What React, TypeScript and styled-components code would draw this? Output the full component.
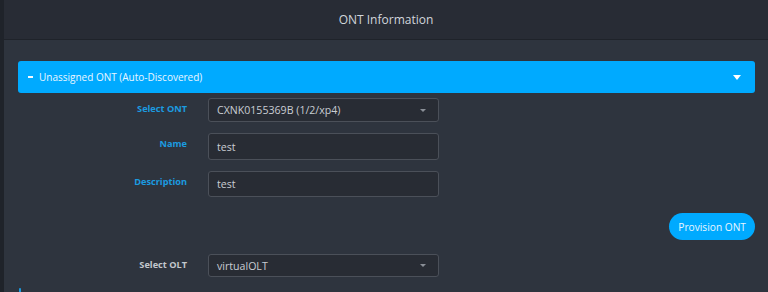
import styled, { createGlobalStyle } from "styled-components";

const GlobalStyle = createGlobalStyle`
  html, body {
    margin: 0;
    padding: 0;
    background: #2e343e;
    font-family: "Open Sans", "Noto Sans", sans-serif;
    overflow: hidden;
  }
`;

const Page = styled.div`
  display: flex;
  height: 292px;
`;

const SideStrip = styled.div`
  width: 4px;
  background: #1f232a;
`;

const Main = styled.div`
  flex: 1;
  display: flex;
  flex-direction: column;
`;

const Header = styled.header`
  height: 41px;
  background: #282c35;
  border-bottom: 1px solid #1f232a;
  display: flex;
  align-items: center;
  justify-content: center;
  color: #d2d6dc;
  font-size: 12px;
`;

const Content = styled.div`
  padding: 21px 13px 0 14px;
`;

const AccordionBar = styled.div`
  height: 32px;
  background: #00aaff;
  border-radius: 3px;
  display: flex;
  align-items: center;
  padding: 0 10px 0 10px;
  color: #eaf6ff;
  font-size: 10px;
`;

const Minus = styled.span`
  width: 5px;
  height: 1.5px;
  background: #f2f9ff;
  margin-right: 6px;
`;

const BarTitle = styled.span`
  flex: 1;
`;

const Caret = styled.span`
  width: 0;
  height: 0;
  border-left: 4px solid transparent;
  border-right: 4px solid transparent;
  border-top: 5px solid #ffffff;
  margin-right: 4px;
`;

const Form = styled.div`
  display: flex;
  flex-direction: column;
  padding-top: 5px;
`;

const Row = styled.div<{ $gap: number }>`
  display: grid;
  grid-template-columns: 169px 231px;
  column-gap: 21px;
  align-items: start;
  margin-bottom: ${(p) => p.$gap}px;
`;

const Label = styled.label<{ $muted?: boolean }>`
  text-align: right;
  font-size: 9.2px;
  font-weight: 700;
  padding-top: 4px;
  color: ${(p) => (p.$muted ? "#c3c7cd" : "#1b9be0")};
`;

const Field = styled.div<{ $h: number }>`
  height: ${(p) => p.$h}px;
  box-sizing: border-box;
  background: #282c34;
  border: 1px solid #4b5059;
  border-radius: 3px;
  display: flex;
  align-items: center;
  padding: 0 12px 0 8px;
  color: #c9cdd3;
  font-size: 10.6px;
`;

const FieldText = styled.span`
  flex: 1;
`;

const SmallCaret = styled.span`
  width: 0;
  height: 0;
  border-left: 3px solid transparent;
  border-right: 3px solid transparent;
  border-top: 3px solid #8a8f97;
`;

const ButtonRow = styled.div`
  display: flex;
  justify-content: flex-end;
  margin-bottom: 14px;
`;

const PillButton = styled.button`
  height: 27px;
  padding: 0 9px;
  border: none;
  border-radius: 14px;
  background: #00aaff;
  color: #eaf6ff;
  font-family: inherit;
  font-size: 10.2px;
`;

const NextMark = styled.span`
  display: block;
  width: 2px;
  height: 4px;
  margin-left: 1px;
  background: #1b9be0;
  border-radius: 1px 1px 0 0;
`;

const App = () => {
  return (
    <>
      <GlobalStyle />
      <Page>
        <SideStrip />
        <Main>
          <Header>ONT Information</Header>
          <Content>
            <AccordionBar>
              <Minus />
              <BarTitle>Unassigned ONT (Auto-Discovered)</BarTitle>
              <Caret />
            </AccordionBar>
            <Form>
              <Row $gap={11}>
                <Label>Select ONT</Label>
                <Field $h={24}>
                  <FieldText>CXNK0155369B (1/2/xp4)</FieldText>
                  <SmallCaret />
                </Field>
              </Row>
              <Row $gap={11}>
                <Label>Name</Label>
                <Field $h={27}>
                  <FieldText>test</FieldText>
                </Field>
              </Row>
              <Row $gap={16}>
                <Label>Description</Label>
                <Field $h={26}>
                  <FieldText>test</FieldText>
                </Field>
              </Row>
              <ButtonRow>
                <PillButton>Provision ONT</PillButton>
              </ButtonRow>
              <Row $gap={11}>
                <Label $muted>Select OLT</Label>
                <Field $h={23}>
                  <FieldText>virtualOLT</FieldText>
                  <SmallCaret />
                </Field>
              </Row>
              <NextMark />
            </Form>
          </Content>
        </Main>
      </Page>
    </>
  );
};

export default App;
